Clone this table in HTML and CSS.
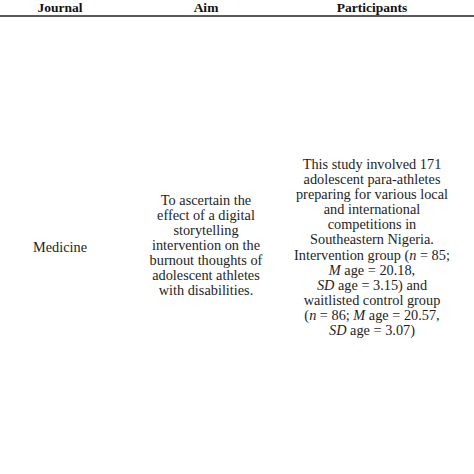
FILE: index.html
```html
<!DOCTYPE html>
<html>
<head>
<meta charset="utf-8">
<link rel="stylesheet" href="styles.css">
</head>
<body>
<div class="table">
  <div class="head">
    <div class="cell c1">Journal</div>
    <div class="cell c2">Aim</div>
    <div class="cell c3">Participants</div>
  </div>
  <div class="row">
    <div class="cell c1">Medicine</div>
    <div class="cell c2">To ascertain the<br>effect of a digital<br>storytelling<br>intervention on the<br>burnout thoughts of<br>adolescent athletes<br>with disabilities.</div>
    <div class="cell c3">This study involved 171<br>adolescent para-athletes<br>preparing for various local<br>and international<br>competitions in<br>Southeastern Nigeria.<br>Intervention group (<i>n</i> = 85;<br><i>M</i> age = 20.18,<br><i>SD</i> age = 3.15) and<br>waitlisted control group<br>(<i>n</i> = 86; <i>M</i> age = 20.57,<br><i>SD</i> age = 3.07)</div>
  </div>
</div>
</body>
</html>
```
FILE: styles.css
```css
html, body {
  margin: 0;
  padding: 0;
  background: #fff;
}
body {
  width: 474px;
  height: 474px;
  overflow: hidden;
  font-family: "Liberation Serif", "Times New Roman", serif;
  color: #1e1e1e;
}
.table {
  display: flex;
  flex-direction: column;
}
.head, .row {
  display: grid;
  grid-template-columns: 120px 172px 160px 1fr;
}
.head {
  height: 14px;
  padding-top: 1px;
  border-bottom: 2px solid #5a5a5a;
  font-weight: bold;
  font-size: 13.5px;
  line-height: 13px;
  color: #111;
}
.row {
  height: 457px;
  align-items: center;
  font-size: 14.3px;
  line-height: 15.1px;
}
.cell {
  text-align: center;
}
.row .c1 {
  margin-top: 4px;
}
.row .c3 {
  margin-top: 4px;
}
```
